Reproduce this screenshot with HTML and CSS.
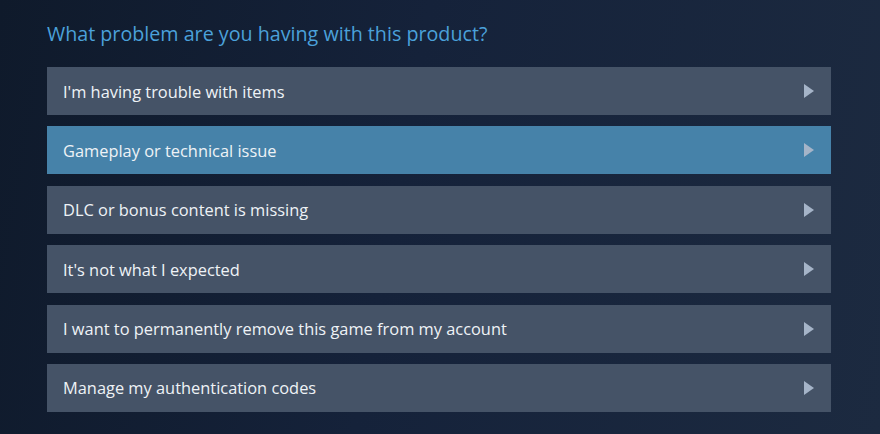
FILE: index.html
```html
<!DOCTYPE html>
<html lang="en">
<head>
<meta charset="utf-8">
<title>Help</title>
<link rel="stylesheet" href="styles.css">
</head>
<body>
<main class="page">
  <h1 class="title">What problem are you having with this product?</h1>
  <ul class="options">
    <li class="option"><span>I'm having trouble with items</span><i class="arrow"></i></li>
    <li class="option active"><span>Gameplay or technical issue</span><i class="arrow"></i></li>
    <li class="option"><span>DLC or bonus content is missing</span><i class="arrow"></i></li>
    <li class="option"><span>It's not what I expected</span><i class="arrow"></i></li>
    <li class="option"><span>I want to permanently remove this game from my account</span><i class="arrow"></i></li>
    <li class="option"><span>Manage my authentication codes</span><i class="arrow"></i></li>
  </ul>
</main>
</body>
</html>
```

FILE: styles.css
```css
html, body {
  margin: 0;
  padding: 0;
  height: 100%;
}
body {
  background: linear-gradient(100deg, #0f1a2b 0%, #15223a 45%, #1c2a40 100%);
  font-family: "Open Sans", "DejaVu Sans", sans-serif;
  overflow: hidden;
}
.page {
  padding: 21px 49px 0 47px;
}
.title {
  margin: 0 0 20px 0;
  font-size: 19.7px;
  font-weight: 400;
  line-height: 26px;
  color: #4ba1da;
}
.options {
  list-style: none;
  margin: 0;
  padding: 0;
  display: flex;
  flex-direction: column;
  gap: 11.4px;
}
.option {
  height: 48px;
  background: #455367;
  display: flex;
  align-items: center;
  justify-content: space-between;
  padding: 0 17px 0 16px;
  color: #eef2f6;
  font-size: 16.4px;
}
.option.active {
  background: #4682a9;
}
.arrow {
  width: 0;
  height: 0;
  border-top: 7.5px solid transparent;
  border-bottom: 7.5px solid transparent;
  border-left: 10px solid #a5b4c8;
}
```
